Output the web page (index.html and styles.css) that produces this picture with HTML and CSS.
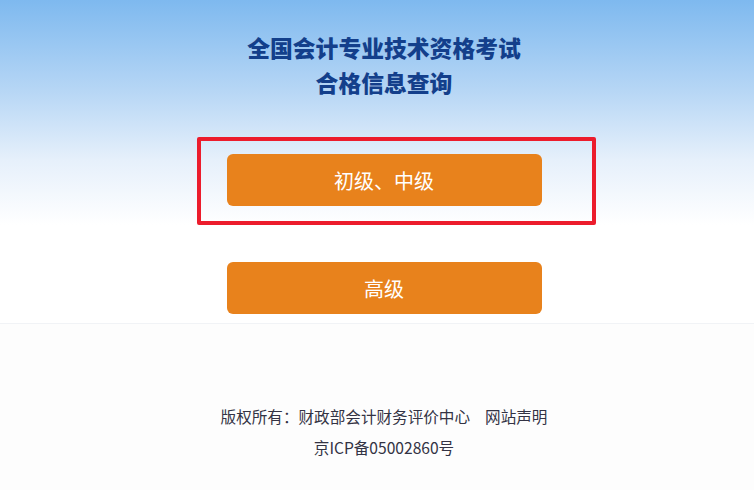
FILE: index.html
```html
<!DOCTYPE html>
<html lang="zh-CN">
<head>
<meta charset="utf-8">
<title>全国会计专业技术资格考试合格信息查询</title>
<link rel="stylesheet" href="styles.css">
</head>
<body>
  <main class="main">
    <h1 class="title">全国会计专业技术资格考试<br>合格信息查询</h1>
    <div class="levels">
      <div class="level level-marked">
        <a class="level-btn" href="#">初级、中级</a>
      </div>
      <div class="level">
        <a class="level-btn" href="#">高级</a>
      </div>
    </div>
  </main>
  <footer class="footer">
    <p class="footer-line">版权所有：财政部会计财务评价中心<a class="footer-link" href="#">网站声明</a></p>
    <p class="footer-line">京ICP备05002860号</p>
  </footer>
</body>
</html>
```

FILE: styles.css
```css
* {
  box-sizing: border-box;
}

html, body {
  margin: 0;
  padding: 0;
}

body {
  width: 754px;
  min-height: 490px;
  font-family: "Noto Sans CJK SC", "Noto Sans", sans-serif;
  background: #fdfdfd;
}

.main {
  background: linear-gradient(to bottom, #7eb9ef 0px, #b6d6f5 90px, #e6f0fb 160px, #ffffff 225px, #ffffff 100%);
  border-bottom: 1px solid #f1f3f6;
  padding: 30px 0 9px 14px;
}

.title {
  margin: 0;
  text-align: center;
  font-size: 22.8px;
  line-height: 35px;
  font-weight: 800;
  color: #133f8b;
}

.levels {
  display: flex;
  flex-direction: column;
  align-items: center;
  gap: 56px;
  margin-top: 54px;
}

.level {
  position: relative;
  width: 315px;
}

/* highlight frame around the first entry */
.level-marked::before {
  content: "";
  position: absolute;
  left: -30px;
  top: -17px;
  right: -54px;
  bottom: -19px;
  border: 4px solid #ec1c2c;
  border-radius: 2px;
  pointer-events: none;
}

.level-btn {
  display: flex;
  align-items: center;
  justify-content: center;
  height: 52px;
  border-radius: 6px;
  background: #e8821c;
  color: #ffffff;
  font-size: 20px;
  text-decoration: none;
}

.footer {
  padding: 77px 0 0 14px;
  text-align: center;
  color: #333344;
  font-size: 15.6px;
}

.footer-line {
  margin: 0;
  line-height: 31px;
}

.footer-link {
  margin-left: 15px;
  color: #333344;
  text-decoration: none;
}
```
